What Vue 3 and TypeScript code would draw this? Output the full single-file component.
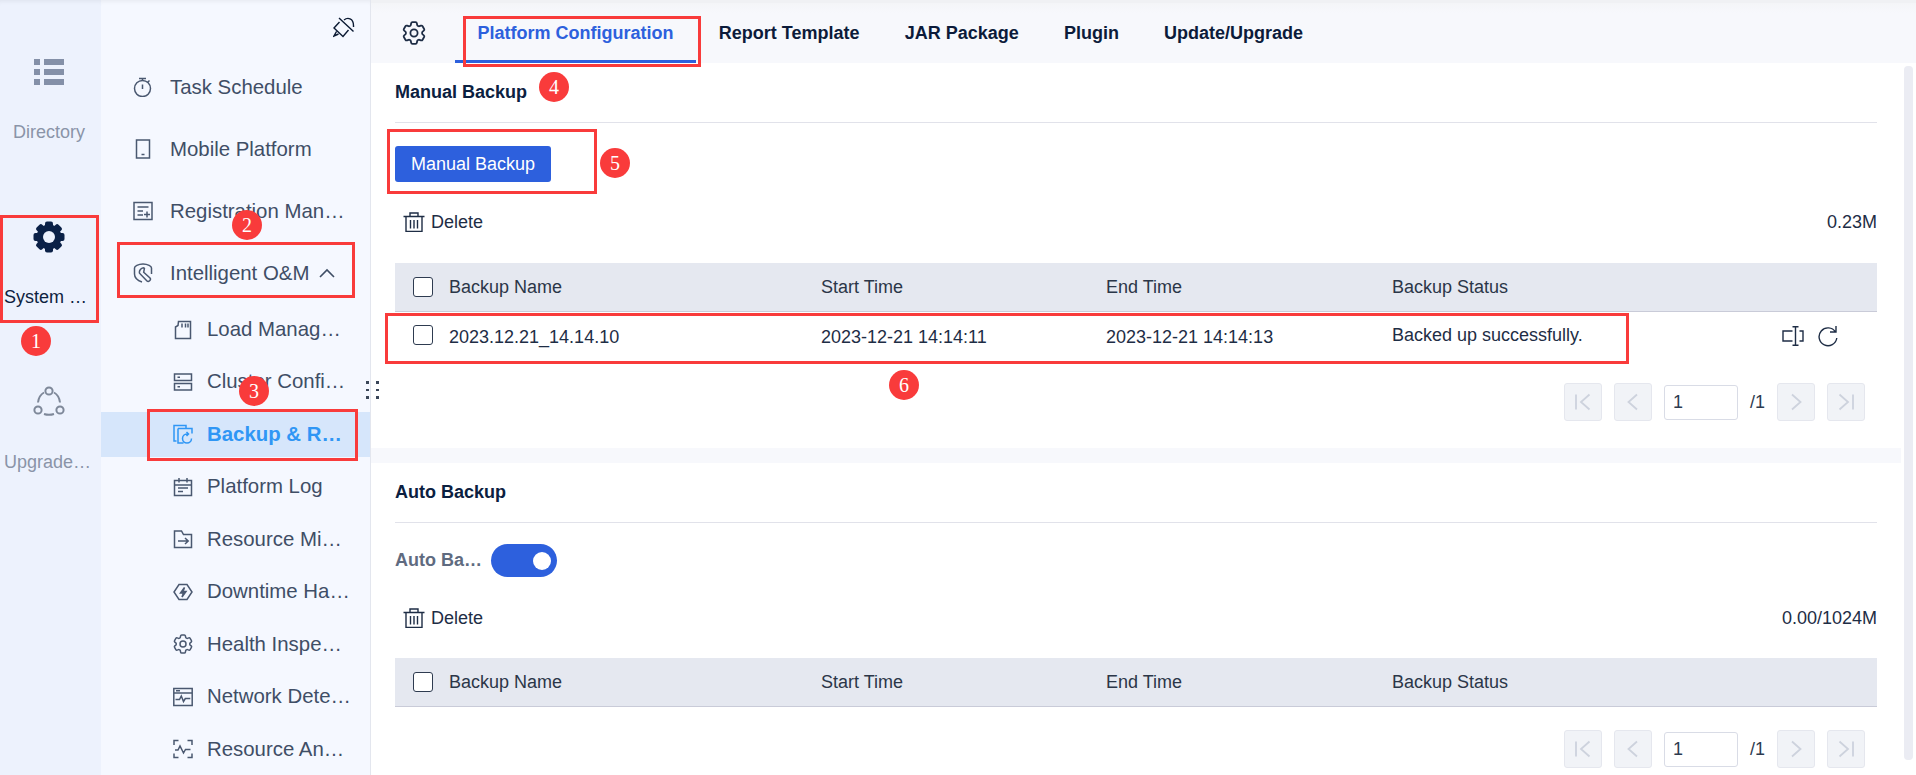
<template>
  <div class="app">
    <!-- first column -->
    <aside class="rail">
      <div class="rail-item">
        <div class="rail-icon">
          <svg width="30" height="26" viewBox="0 0 30 26" fill="#8490a8">
            <rect x="0" y="0" width="6" height="6" />
            <rect x="10" y="0" width="20" height="6" />
            <rect x="0" y="10" width="6" height="6" />
            <rect x="10" y="10" width="20" height="6" />
            <rect x="0" y="20" width="6" height="6" />
            <rect x="10" y="20" width="20" height="6" />
          </svg>
        </div>
        <div class="rail-label">Directory</div>
      </div>
      <div class="rail-item active">
        <div class="rail-icon">
          <svg width="32" height="32" viewBox="0 0 32 32">
            <g fill="#0b2147">
              <rect v-for="a in gearAngles" :key="a" x="12" y="0.5" width="8" height="31" rx="2" :transform="`rotate(${a} 16 16)`" />
            </g>
            <circle cx="16" cy="16" r="9" fill="none" stroke="#0b2147" stroke-width="7" />
            <circle cx="16" cy="16" r="6" fill="#edf2fd" />
          </svg>
        </div>
        <div class="rail-label">System Management</div>
      </div>
      <div class="rail-item">
        <div class="rail-icon">
          <svg width="32" height="32" viewBox="0 0 32 32" fill="none" stroke="#7e8899" stroke-width="2">
            <circle cx="16" cy="5" r="3.600" />
            <circle cx="5" cy="24" r="3.600" />
            <circle cx="27" cy="24" r="3.600" />
            <path d="M11 6.500C7.500 8.500 5.500 12 5 16.500M21 6.500C24.500 8.500 26.500 12 27 16.500M11 28c3 1 7 1 10 0" />
          </svg>
        </div>
        <div class="rail-label">Upgrade Center</div>
      </div>
    </aside>

    <!-- second column -->
    <nav class="menu">
      <div class="menu-top">
        <svg class="pin" width="22" height="22" viewBox="0 0 22 22" fill="none" stroke="#0b1a33" stroke-width="1.400">
          <path d="M6 2l14.500 13.500M11 4c3-2.500 10-3 9.500 7M6.500 6L1 12l9 8.500 5.500-6.500M3.500 15.500L1 20l4.500-2" />
        </svg>
      </div>
      <div v-for="item in topItems" :key="item.label" class="menu-item">
        <svg class="menu-icon" width="20" height="20" :viewBox="icons[item.icon].vb">
          <path :d="icons[item.icon].d" :stroke-width="icons[item.icon].sw" />
        </svg>
        <span class="menu-text">{{ item.label }}</span>
        <svg v-if="item.open" class="chevron" width="16" height="10" viewBox="0 0 16 10" fill="none" stroke="#3f4e66" stroke-width="1.600">
          <path d="M1 9l7-7 7 7" />
        </svg>
      </div>
      <div class="sub-list">
        <div v-for="item in subItems" :key="item.label" :class="['sub-item', { active: item.active }]">
          <svg class="menu-icon" width="20" height="20" :viewBox="icons[item.icon].vb">
            <path :d="icons[item.icon].d" :stroke-width="icons[item.icon].sw" />
          </svg>
          <span class="menu-text">{{ item.label }}</span>
        </div>
      </div>
      <div class="drag-handle">
        <i v-for="n in 6" :key="n" />
      </div>
    </nav>

    <main class="main">
      <header class="tabs">
        <svg class="tabs-gear" width="24" height="24" viewBox="2 2 20 20" fill="none" stroke="#1e2d45" stroke-width="1.500">
          <path :d="gearPath" />
        </svg>
        <div v-for="tab in tabs" :key="tab" :class="['tab', { active: tab === activeTab }]">{{ tab }}</div>
      </header>

      <div class="body">
        <div class="cards">
          <section v-for="sec in sections" :key="sec.title" class="card">
            <h3 class="card-title">{{ sec.title }}</h3>

            <div v-if="sec.auto" class="auto-row">
              <span class="auto-label">Auto Backup</span>
              <span class="switch"><span class="knob" /></span>
            </div>
            <div v-else class="manual-row">
              <button class="primary-btn">Manual Backup</button>
            </div>

            <div class="toolbar">
              <span class="delete">
                <svg width="22" height="20" viewBox="0 0 22 20" fill="none" stroke="#1e2d45" stroke-width="1.400">
                  <path d="M0.500 4.500h21M7 4.500V1h8v3.500M3 4.500v15h16v-15M7.500 8v8.500M11 8v8.500M14.500 8v8.500" />
                </svg>
                Delete
              </span>
              <span class="usage">{{ sec.usage }}</span>
            </div>

            <div class="grid head">
              <span class="check-cell"><span class="checkbox" /></span>
              <span v-for="col in columns" :key="col">{{ col }}</span>
              <span />
            </div>
            <div v-for="row in sec.rows" :key="row.name" class="grid row">
              <span class="check-cell"><span class="checkbox" /></span>
              <span>{{ row.name }}</span>
              <span>{{ row.start }}</span>
              <span>{{ row.end }}</span>
              <span class="status">{{ row.status }}</span>
              <span class="row-actions">
                <svg width="22" height="20" viewBox="0 0 22 20" fill="none" stroke="#1e2d45" stroke-width="1.400">
                  <path d="M10.500 5H1v10h9.500M13.500 0.500v19M10.500 0.700h6M10.500 19.300h6M17.500 5H21v10h-3.500" />
                </svg>
                <svg width="21" height="22" viewBox="0 0 21 22" fill="none" stroke="#1e2d45" stroke-width="1.400">
                  <path d="M18.500 7A8.900 8.900 0 1 0 19.800 13M19 1v6h-6" />
                </svg>
              </span>
            </div>

            <div class="pager">
              <span class="page-btn"><svg width="20" height="20" viewBox="0 0 20 20"><path d="M3 2.500v15M16.500 2.500L8 10l8.500 7.500" /></svg></span>
              <span class="page-btn"><svg width="20" height="20" viewBox="0 0 20 20"><path d="M14 2.500L5.500 10l8.500 7.500" /></svg></span>
              <input class="page-input" value="1" />
              <span class="page-total">/1</span>
              <span class="page-btn"><svg width="20" height="20" viewBox="0 0 20 20"><path d="M6 2.500l8.500 7.500L6 17.500" /></svg></span>
              <span class="page-btn"><svg width="20" height="20" viewBox="0 0 20 20"><path d="M3.500 2.500L12 10l-8.500 7.500M17 2.500v15" /></svg></span>
            </div>
          </section>
        </div>
        <div class="scrollbar"><div class="thumb" /></div>
      </div>
    </main>

    <!-- annotations laid over the screenshot -->
    <div class="mark-box box-1" />
    <div class="mark-box box-2" />
    <div class="mark-box box-3" />
    <div class="mark-box box-4" />
    <div class="mark-box box-5" />
    <div class="mark-box box-6" />
    <div v-for="n in 6" :key="n" :class="['mark-dot', `dot-${n}`]">{{ n }}</div>
  </div>
</template>

<script setup lang="ts">
interface MenuItem {
  label: string
  icon: string
  open?: boolean
  active?: boolean
}

interface BackupRow {
  name: string
  start: string
  end: string
  status: string
}

interface Section {
  title: string
  auto: boolean
  usage: string
  rows: BackupRow[]
}

const gearPath =
  'M9.594 3.94c.09-.542.56-.94 1.11-.94h2.593c.55 0 1.02.398 1.11.94l.213 1.281c.063.374.313.686.645.87.074.04.147.083.22.127.325.196.72.257 1.075.124l1.217-.456a1.125 1.125 0 0 1 1.37.49l1.296 2.247a1.125 1.125 0 0 1-.26 1.431l-1.003.827c-.293.241-.438.613-.43.992a7.723 7.723 0 0 1 0 .255c-.008.378.137.75.43.991l1.004.827c.424.35.534.955.26 1.43l-1.298 2.247a1.125 1.125 0 0 1-1.369.491l-1.217-.456c-.355-.133-.75-.072-1.076.124a6.47 6.47 0 0 1-.22.128c-.331.183-.581.495-.644.869l-.213 1.281c-.09.543-.56.94-1.11.94h-2.594c-.55 0-1.019-.398-1.11-.94l-.213-1.281c-.062-.374-.312-.686-.644-.87a6.52 6.52 0 0 1-.22-.127c-.325-.196-.72-.257-1.076-.124l-1.217.456a1.125 1.125 0 0 1-1.369-.49l-1.297-2.247a1.125 1.125 0 0 1 .26-1.431l1.004-.827c.292-.24.437-.613.43-.991a6.932 6.932 0 0 1 0-.255c.007-.38-.138-.751-.43-.992l-1.004-.827a1.125 1.125 0 0 1-.26-1.43l1.297-2.247a1.125 1.125 0 0 1 1.37-.491l1.216.456c.356.133.751.072 1.076-.124.072-.044.146-.086.22-.128.332-.183.582-.495.644-.869l.214-1.28ZM15 12a3 3 0 1 1-6 0a3 3 0 1 1 6 0Z'

const gearAngles = [0, 45, 90, 135]

const icons: Record<string, { d: string; vb: string; sw: number }> = {
  task: { vb: '0 0 20 20', sw: 1.5, d: 'M6 1.500h7M9.500 1.500v2.500M16.500 3.500l-2 2M9.500 7.500v4.500M17.500 11.500a8 8 0 1 1-16 0a8 8 0 1 1 16 0Z' },
  mobile: { vb: '0 0 20 20', sw: 1.5, d: 'M3.500 1h13v18h-13zM8.500 15.500h3' },
  reg: { vb: '0 0 20 20', sw: 1.5, d: 'M1 1.500h18v17H1zM4.500 6h11M4.500 10h5.500M4.500 14h5.500M11 13.500h6M14 10.500v6' },
  om: { vb: '0 0 20 20', sw: 1.5, d: 'M9 19C4.500 17.500 1.500 15 1.500 11V5C1.500 3.500 5 1 10 1C15 1 18.500 3.500 18.500 5V11M11.500 4.800C8.500 4.500 5.800 7 6.500 10.200L14 18C15.500 19.500 18.500 17 17 15L10.700 9.300L11.500 4.800' },
  load: { vb: '0 0 20 20', sw: 1.5, d: 'M5.500 1.500h12v17h-15V7l2.500-1.500zM9 3.500v4M12.500 3.500v4M15 3.500v4' },
  cluster: { vb: '0 0 20 20', sw: 1.5, d: 'M1.500 2h17v6.500h-17zM1.500 11.500h17V18h-17zM4.500 5.200h2.500M4.500 14.700h2.500' },
  backup: { vb: '0 0 20 20', sw: 1.5, d: 'M3.500 17H1V1.500h12v2.500M5 4.500h14v5M5 4.500V19h5.500M18.500 14.500a4.500 4.500 0 1 1-4.500-4.500h1.500M13.500 8l2 2-2 2' },
  log: { vb: '0 0 20 20', sw: 1.5, d: 'M1.500 3.500h17v15h-17zM1.500 8h17M6 1v4.500M14 1v4.500M5 11h10M5 14.500h5' },
  migrate: { vb: '0 0 20 20', sw: 1.5, d: 'M1.500 2h7l2 3.500h8v13h-17zM5 12h10M12 9l3.200 3-3.200 3' },
  down: { vb: '0 0 20 20', sw: 1.5, d: 'M6 2.500h8l5 7.500-5 7.500H6L1 10zM11.500 5.500L7.500 11h3l-1.500 4 4-5.500h-3z' },
  health: { vb: '2 2 20 20', sw: 1.5, d: gearPath },
  net: { vb: '0 0 20 20', sw: 1.5, d: 'M.8 1.500h18.400v17H.8zM.8 6h18.400M3 3.800h4M2.500 12.500h4l1.800-3.500 2.200 5.500 1.800-3h5' },
  analyse: { vb: '0 0 20 20', sw: 1.5, d: 'M1 6V1.500h4.500M14.500 1.500H19V6M19 14.500v4h-4.500M5.500 18.500H1v-4M2 11h3l2-4 3.500 7 2-3.500h5' }
}

const topItems: MenuItem[] = [
  { label: 'Task Schedule', icon: 'task' },
  { label: 'Mobile Platform', icon: 'mobile' },
  { label: 'Registration Management', icon: 'reg' },
  { label: 'Intelligent O&M', icon: 'om', open: true }
]

const subItems: MenuItem[] = [
  { label: 'Load Management', icon: 'load' },
  { label: 'Cluster Configuration', icon: 'cluster' },
  { label: 'Backup & Recovery', icon: 'backup', active: true },
  { label: 'Platform Log', icon: 'log' },
  { label: 'Resource Migration', icon: 'migrate' },
  { label: 'Downtime Handling', icon: 'down' },
  { label: 'Health Inspection', icon: 'health' },
  { label: 'Network Detection', icon: 'net' },
  { label: 'Resource Analysis', icon: 'analyse' }
]

const tabs = ['Platform Configuration', 'Report Template', 'JAR Package', 'Plugin', 'Update/Upgrade']
const activeTab = 'Platform Configuration'

const columns = ['Backup Name', 'Start Time', 'End Time', 'Backup Status']

const sections: Section[] = [
  {
    title: 'Manual Backup',
    auto: false,
    usage: '0.23M',
    rows: [
      {
        name: '2023.12.21_14.14.10',
        start: '2023-12-21 14:14:11',
        end: '2023-12-21 14:14:13',
        status: 'Backed up successfully.'
      }
    ]
  },
  { title: 'Auto Backup', auto: true, usage: '0.00/1024M', rows: [] }
]
</script>

<style>
html,
body {
  margin: 0;
  background: #fff;
}
</style>

<style scoped>
.app {
  position: relative;
  display: flex;
  width: 1916px;
  height: 775px;
  overflow: hidden;
  font-family: 'Liberation Sans', Arial, sans-serif;
  font-size: 18px;
  color: #1e2d45;
}

/* rail */
.rail {
  width: 101px;
  flex-shrink: 0;
  padding-top: 54px;
  box-sizing: border-box;
  background: #edf2fd;
  box-shadow: inset 0 5px 5px -4px rgba(0, 0, 0, 0.07);
}

.rail-item {
  height: 165px;
  padding: 0 7px 0 4px;
  box-sizing: border-box;
}

.rail-icon {
  height: 36px;
  display: flex;
  align-items: center;
  justify-content: center;
}

.rail-label {
  margin-top: 30px;
  line-height: 24px;
  color: #8a94a8;
  text-align: center;
  white-space: nowrap;
  overflow: hidden;
  text-overflow: ellipsis;
}

.rail-item.active .rail-label {
  color: #0d2240;
}

/* menu */
.menu {
  position: relative;
  width: 270px;
  flex-shrink: 0;
  box-sizing: border-box;
  background: #f5f8ff;
  border-right: 1px solid #e3e6ee;
  font-size: 20.4px;
  color: #3f4e66;
  box-shadow: inset 0 5px 5px -4px rgba(0, 0, 0, 0.07);
}

.menu-top {
  height: 56px;
  display: flex;
  justify-content: flex-end;
  padding: 16px 15px 0 0;
  box-sizing: border-box;
}

.menu-item {
  height: 62px;
  display: flex;
  align-items: center;
  gap: 17px;
  padding: 0 17px 0 32px;
}

.menu-icon {
  flex-shrink: 0;
  fill: none;
  stroke: #4a5870;
}

.menu-text {
  min-width: 0;
  white-space: nowrap;
  overflow: hidden;
  text-overflow: ellipsis;
}

.chevron {
  flex-shrink: 0;
  margin-left: -7px;
}

.sub-list {
  display: flex;
  flex-direction: column;
  gap: 7.45px;
  padding-top: 3px;
}

.sub-item {
  height: 45px;
  display: flex;
  align-items: center;
  gap: 14px;
  padding: 0 18.5px 0 72px;
}

.sub-item.active {
  background: #d6e6fb;
  color: #2f96f5;
  font-weight: 700;
}

.sub-item.active .menu-icon {
  stroke: #2f96f5;
}

.drag-handle {
  position: absolute;
  top: 381px;
  right: -9px;
  display: grid;
  grid-template-columns: 3px 3px;
  gap: 5px 7px;
}

.drag-handle i {
  width: 2.500px;
  height: 2.500px;
  background: #3a4658;
}

/* main */
.main {
  flex: 1;
  min-width: 0;
  display: flex;
  flex-direction: column;
  background: #fff;
}

.tabs {
  height: 63px;
  flex-shrink: 0;
  display: flex;
  align-items: flex-end;
  padding-left: 31px;
  box-sizing: border-box;
  border-top: 3px solid #f0f1f4;
  background: linear-gradient(#f4f5f8, #f7f8fc 10px);
}

.tabs-gear {
  align-self: center;
  margin-right: 29px;
}

.tab {
  height: 60px;
  line-height: 60px;
  padding: 0 22.6px;
  box-sizing: border-box;
  font-weight: 700;
  color: #0c1b3a;
  white-space: nowrap;
}

.tab.active {
  color: #2d60dd;
  border-bottom: 3px solid #2d60dd;
}

.body {
  flex: 1;
  min-height: 0;
  display: flex;
}

.cards {
  flex: 1;
  min-width: 0;
  display: flex;
  flex-direction: column;
  gap: 15px;
  background: #f7f8fc;
}

.card {
  padding: 0 24px 27px;
  background: #fff;
}

.card-title {
  height: 59px;
  line-height: 59px;
  margin: 0;
  font-size: 18px;
  font-weight: 700;
  color: #0b2040;
  border-bottom: 1px solid #e1e2ea;
}

.manual-row {
  margin-top: 23px;
}

.primary-btn {
  display: block;
  width: 156px;
  height: 36px;
  padding: 0;
  border: none;
  border-radius: 3px;
  background: #2d60dd;
  color: #fff;
  font: inherit;
}

.auto-row {
  display: flex;
  align-items: center;
  margin-top: 21px;
  height: 33px;
}

.auto-label {
  width: 92px;
  margin-right: 4px;
  font-weight: 700;
  color: #5f6b80;
  white-space: nowrap;
  overflow: hidden;
  text-overflow: ellipsis;
}

.switch {
  width: 66px;
  height: 33px;
  display: flex;
  align-items: center;
  justify-content: flex-end;
  padding-right: 6px;
  box-sizing: border-box;
  border-radius: 17px;
  background: #2d60dd;
}

.knob {
  width: 18px;
  height: 18px;
  border-radius: 50%;
  background: #fff;
}

.toolbar {
  height: 40px;
  display: flex;
  align-items: center;
  justify-content: space-between;
}

.manual-row + .toolbar {
  margin-top: 20px;
}

.auto-row + .toolbar {
  margin-top: 21px;
}

.delete {
  display: flex;
  align-items: center;
  gap: 6px;
  padding-left: 8px;
}

.grid {
  display: grid;
  grid-template-columns: 54px 372px 285px 286px 390px 95px;
  align-items: center;
}

.head {
  height: 49px;
  margin-top: 21px;
  box-sizing: border-box;
  background: #e5e8f0;
  border-bottom: 1px solid #c9cbd8;
  color: #2b3648;
}

.card:last-child .head {
  margin-top: 20px;
}

.row {
  height: 50px;
}

.check-cell {
  padding-left: 18px;
  display: flex;
}

.row .check-cell {
  margin-bottom: 4px;
}

.checkbox {
  width: 20px;
  height: 20px;
  box-sizing: border-box;
  border: 1px solid #2e3b50;
  border-radius: 3px;
  background: #fff;
}

.status {
  margin-bottom: 3px;
}

.row-actions {
  display: flex;
  align-items: center;
  gap: 13px;
  margin-bottom: 2px;
}

.pager {
  display: flex;
  align-items: center;
  justify-content: flex-end;
  gap: 12px;
  margin-top: 21px;
  padding-right: 12px;
}

.card:last-child .pager {
  margin-top: 23px;
}

.page-btn {
  width: 38px;
  height: 38px;
  display: flex;
  align-items: center;
  justify-content: center;
  box-sizing: border-box;
  border: 1px solid #e5e7ee;
  border-radius: 3px;
  background: #f1f3f7;
}

.page-btn svg {
  fill: none;
  stroke: #cdd2dd;
  stroke-width: 1.8;
}

.page-input {
  width: 74px;
  height: 35px;
  padding: 0 0 0 8px;
  box-sizing: border-box;
  border: 1px solid #d9dce6;
  border-radius: 3px;
  font: inherit;
  color: #2d3b50;
}

.page-total {
  color: #2d3b50;
}

.scrollbar {
  width: 15px;
  flex-shrink: 0;
  padding: 3px 3px 15px;
  box-sizing: border-box;
  display: flex;
}

.thumb {
  width: 9px;
  height: 694px;
  border-radius: 4px;
  background: #ebecf3;
}

/* red notes */
.mark-box {
  position: absolute;
  box-sizing: border-box;
  border: 3px solid #f93b3b;
}

.box-1 { left: 0; top: 215px; width: 99px; height: 108px; }
.box-2 { left: 117px; top: 242px; width: 238px; height: 56px; }
.box-3 { left: 147px; top: 409px; width: 211px; height: 52px; }
.box-4 { left: 463px; top: 16px; width: 238px; height: 51px; }
.box-5 { left: 387px; top: 129px; width: 210px; height: 65px; }
.box-6 { left: 385px; top: 313px; width: 1244px; height: 51px; }

.mark-dot {
  position: absolute;
  width: 30px;
  height: 30px;
  line-height: 30px;
  border-radius: 50%;
  background: #f93b3b;
  color: #fff;
  text-align: center;
  font-family: 'Liberation Serif', serif;
  font-size: 20px;
}

.dot-1 { left: 21px; top: 326px; }
.dot-2 { left: 232px; top: 210px; }
.dot-3 { left: 239px; top: 376px; }
.dot-4 { left: 539px; top: 72px; }
.dot-5 { left: 600px; top: 148px; }
.dot-6 { left: 889px; top: 370px; }
</style>
